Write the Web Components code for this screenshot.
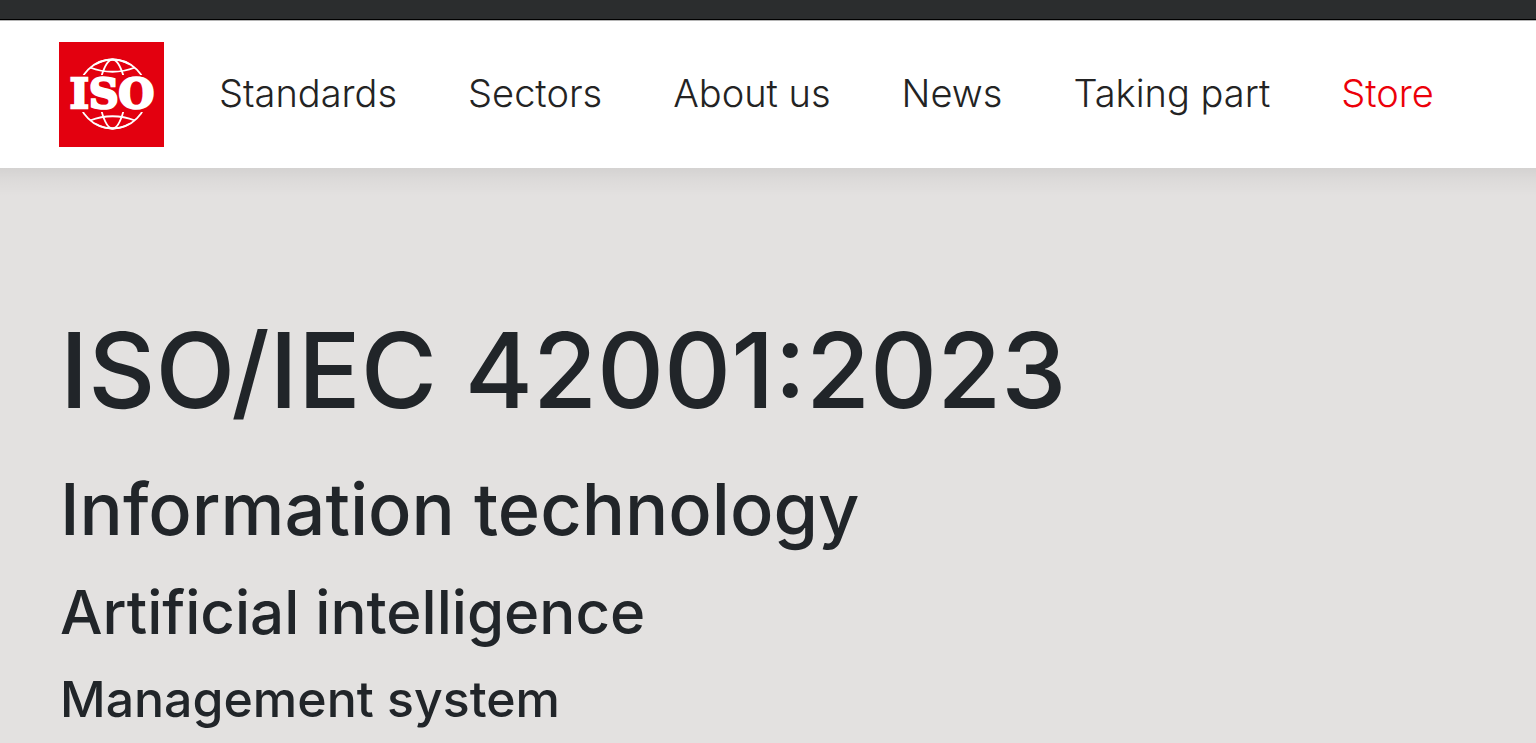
<!DOCTYPE html>
<html lang="en">
<head>
<meta charset="utf-8">
<meta name="viewport" content="width=device-width, initial-scale=1">
<title>ISO/IEC 42001:2023</title>
<style>
body { margin: 0; min-height: 100vh; background: #e3e1e0; font-family: Inter, "Liberation Sans", sans-serif; color: #212529; }
</style>
</head>
<body>
<iso-page>
  <iso-header slot="header">
    <iso-nav-link href="#standards">Standards</iso-nav-link>
    <iso-nav-link href="#sectors">Sectors</iso-nav-link>
    <iso-nav-link href="#about">About us</iso-nav-link>
    <iso-nav-link href="#news">News</iso-nav-link>
    <iso-nav-link href="#part">Taking part</iso-nav-link>
    <iso-nav-link href="#store" accent>Store</iso-nav-link>
  </iso-header>
  <iso-title-block>
    <span slot="reference">ISO/IEC 42001:2023</span>
    <span slot="field">Information technology</span>
    <span slot="topic">Artificial intelligence</span>
    <span slot="part">Management system</span>
  </iso-title-block>
</iso-page>
<script>
const define = (name, html, setup) => customElements.define(name, class extends HTMLElement {
  constructor() {
    super();
    this.attachShadow({ mode: "open" }).innerHTML = html;
  }
  connectedCallback() { if (setup) setup(this); }
});

define("iso-logo", `
<style>
:host { display: block; flex: none; width: 105px; height: 105px; }
a, svg { display: block; }
text { font: bold 41px "DejaVu Serif", serif; fill: #fff; stroke: #fff; stroke-width: 2.5; }
</style>
<a href="#home" aria-label="ISO home">
<svg width="105" height="105" viewBox="0 0 105 105">
  <defs><clipPath id="caps"><path d="M0 0H105V33H0ZM0 70H105V105H0Z"/></clipPath></defs>
  <rect width="105" height="105" fill="#e3000f"/>
  <g clip-path="url(#caps)" fill="none" stroke="#fff" stroke-width="1.8">
    <circle cx="53.500" cy="52" r="34.500"/>
    <path d="M42.500 34C45 26 49 17.500 53.500 17.500S62 26 64.500 34M42.500 69C45 78 49 86.500 53.500 86.500S62 78 64.500 69"/>
    <path d="M31 25.500Q53.500 34 76 25.500M31 78.500Q53.500 70 76 78.500"/>
    <path d="M37 22Q45 17.500 53.500 17.500T70 22M37 82Q45 86.500 53.500 86.500T70 82"/>
  </g>
  <text x="53" y="66" text-anchor="middle">ISO</text>
</svg></a>`);

define("iso-nav-link", `
<style>
:host { display: block; }
a { display: block; font-size: 38px; line-height: 48px; font-weight: 300; color: #232323; text-decoration: none; white-space: nowrap; }
:host([accent]) a { color: #ec0009; }
</style>
<a><slot></slot></a>`, el => el.shadowRoot.querySelector("a").href = el.getAttribute("href"));

define("iso-header", `
<style>
:host { display: block; position: relative; }
:host::after { content: ""; position: absolute; top: 100%; left: 0; right: 0; height: 28px; background: linear-gradient(rgba(0,0,0,.065), rgba(0,0,0,.03) 40%, rgba(0,0,0,0)); }
.strip { height: 19px; background: #2b2d2e; border-bottom: 1px solid #000; }
header { display: flex; align-items: center; gap: 55px; padding: 21px 59px; background: #fff; border-top: 1px solid #b5b5b5; }
nav { display: flex; gap: 71px; padding-bottom: 4px; }
</style>
<div class="strip"></div>
<header><iso-logo></iso-logo><nav aria-label="Main"><slot></slot></nav></header>`);

define("iso-title-block", `
<style>
:host { display: block; padding: 138px 60px 0; }
h1, h2, h3, h4 { margin: 0; font-weight: 500; }
h1 { font-size: 104px; line-height: 128px; }
h2 { font-size: 72px; line-height: 90px; margin-top: 30px; }
h3 { font-size: 60px; line-height: 74px; margin-top: 21px; }
h4 { font-size: 50px; line-height: 60px; margin-top: 20px; }
</style>
<h1><slot name="reference"></slot></h1>
<h2><slot name="field"></slot></h2>
<h3><slot name="topic"></slot></h3>
<h4><slot name="part"></slot></h4>`);

define("iso-page", `
<style>:host { display: block; } main { display: block; }</style>
<slot name="header"></slot>
<main><slot></slot></main>`);
</script>
</body>
</html>
